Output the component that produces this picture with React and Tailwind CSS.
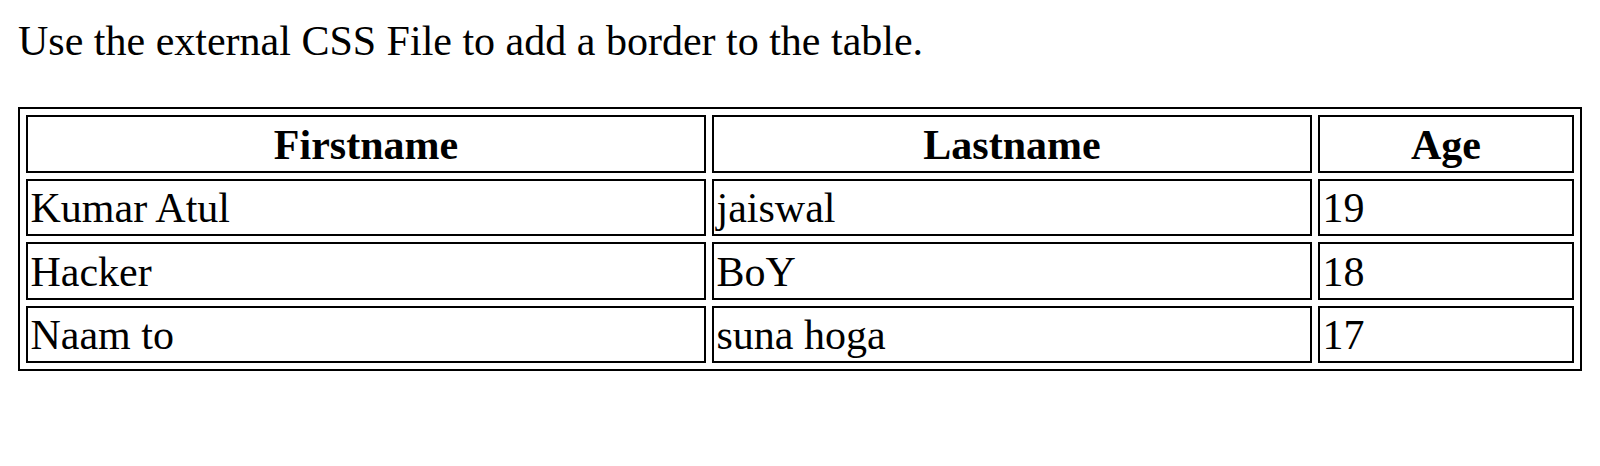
const rows = [
	["Kumar Atul", "jaiswal", "19"],
	["Hacker", "BoY", "18"],
	["Naam to", "suna hoga", "17"],
];

const cell = "border-2 border-black px-[2.5px] pt-[3.5px] pb-[1px] leading-[49px]";

const App = () => {
	return (
		<div className="min-h-[466px] bg-white text-black font-['Liberation_Serif','Times_New_Roman',serif] text-[42px] px-[18px] pt-[17px]">
			<p className="leading-[49px] mb-[41px]">
				Use the external CSS File to add a border to the table.
			</p>
			<table className="w-[1564px] table-fixed border-separate border-spacing-[6px] border-2 border-black">
				<thead>
					<tr>
						<th className={`${cell} w-[680px] font-bold text-center`}>Firstname</th>
						<th className={`${cell} w-[600px] font-bold text-center`}>Lastname</th>
						<th className={`${cell} w-[256px] font-bold text-center`}>Age</th>
					</tr>
				</thead>
				<tbody>
					{rows.map((r) => (
						<tr key={r[0]}>
							{r.map((v, i) => (
								<td key={i} className={`${cell} text-left font-normal`}>
									{v}
								</td>
							))}
						</tr>
					))}
				</tbody>
			</table>
		</div>
	);
};

export default App;
